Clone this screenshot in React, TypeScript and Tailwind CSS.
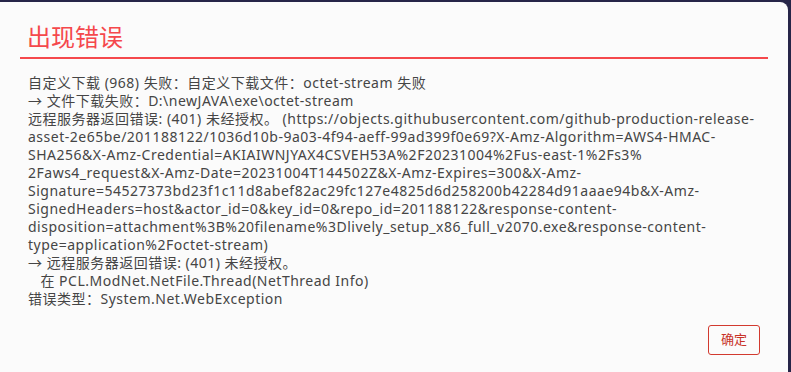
import React from "react";

const lines = [
  "自定义下载 (968) 失败：自定义下载文件：octet-stream 失败",
  "→ 文件下载失败：D:\\newJAVA\\exe\\octet-stream",
  "远程服务器返回错误: (401) 未经授权。 (https://objects.githubusercontent.com/github-production-release-",
  "asset-2e65be/201188122/1036d10b-9a03-4f94-aeff-99ad399f0e69?X-Amz-Algorithm=AWS4-HMAC-",
  "SHA256&X-Amz-Credential=AKIAIWNJYAX4CSVEH53A%2F20231004%2Fus-east-1%2Fs3%",
  "2Faws4_request&X-Amz-Date=20231004T144502Z&X-Amz-Expires=300&X-Amz-",
  "Signature=54527373bd23f1c11d8abef82ac29fc127e4825d6d258200b42284d91aaae94b&X-Amz-",
  "SignedHeaders=host&actor_id=0&key_id=0&repo_id=201188122&response-content-",
  "disposition=attachment%3B%20filename%3Dlively_setup_x86_full_v2070.exe&response-content-",
  "type=application%2Foctet-stream)",
  "→ 远程服务器返回错误: (401) 未经授权。",
  "\u00a0\u00a0\u00a0在 PCL.ModNet.NetFile.Thread(NetThread Info)",
  "错误类型：System.Net.WebException",
];

export default function App() {
  return (
    <div className="w-[791px] h-[372px] bg-[#262548] overflow-hidden pt-[2px] pr-[3px]">
      <div
        className="w-full h-full bg-[#fbfbfb] rounded-tr-[8px] flex flex-col"
        style={{ fontFamily: '"Noto Sans", "Noto Sans CJK SC", sans-serif' }}
      >
        <div className="pl-[27px] pt-[19px] text-[24px] leading-[32px] text-[#f5484c]">
          出现错误
        </div>
        <div className="ml-[20px] mr-[20px] mt-[4px] h-[2px] bg-[#f5484c]" />
        <div className="pl-[28px] pt-[15px] text-[14px] leading-[18px] tracking-[0.5px] text-[#454545]">
          {lines.map((l, i) => (
            <div key={i} className="whitespace-pre">
              {l}
            </div>
          ))}
        </div>
        <div className="flex-1" />
        <div className="flex justify-end pr-[28px] pb-[17px]">
          <button className="w-[52px] h-[30px] border border-[#d23a2f] rounded-[3px] text-[13px] text-[#c83228] flex items-center justify-center">
            确定
          </button>
        </div>
      </div>
    </div>
  );
}
